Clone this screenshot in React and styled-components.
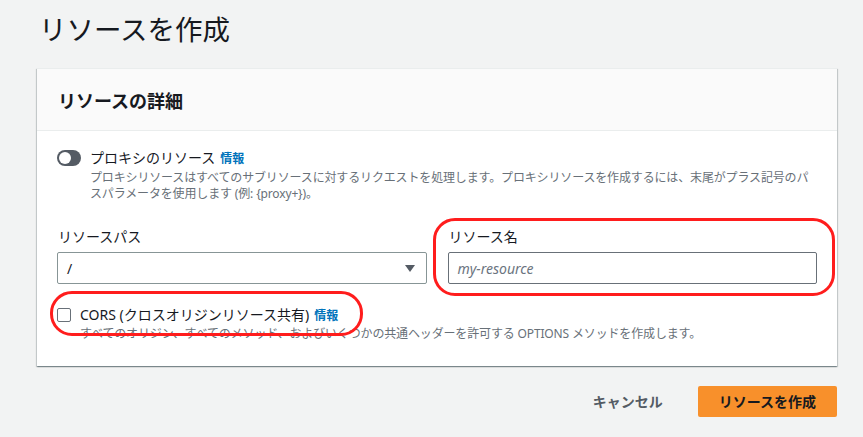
import React from "react";
import styled, { createGlobalStyle } from "styled-components";

const Global = createGlobalStyle`
  html, body { margin: 0; padding: 0; background: #f2f3f3; }
  body {
    font-family: "Noto Sans", "Noto Sans CJK JP", sans-serif;
    color: #16191f;
  }
  * { box-sizing: border-box; }
`;

const Page = styled.div`
  width: 863px;
  min-height: 437px;
  padding: 10px 26px 20px 37px;
  display: flex;
  flex-direction: column;
`;

const Title = styled.h1`
  margin: 0 0 22px 2px;
  font-size: 27.5px;
  line-height: 36px;
  font-weight: 400;
  color: #16191f;
  font-family: "Noto Sans CJK JP", sans-serif;
`;

const Panel = styled.section`
  background: #fff;
  border-top: 1px solid #eaeded;
  box-shadow: 0 1px 1px 0 rgba(0, 28, 36, 0.3), 1px 1px 1px 0 rgba(0, 28, 36, 0.15),
    -1px 1px 1px 0 rgba(0, 28, 36, 0.15);
`;

const PanelHeader = styled.header`
  background: #fafafa;
  border-bottom: 1px solid #eaeded;
  padding: 19px 21px 18px;
`;

const PanelTitle = styled.h2`
  margin: 0;
  font-size: 18px;
  line-height: 24px;
  font-weight: 700;
  font-family: "Noto Sans CJK JP", sans-serif;
`;

const PanelBody = styled.div`
  position: relative;
  padding: 16px 20px 24px;
  display: flex;
  flex-direction: column;
`;

const OptionRow = styled.div`
  display: flex;
  gap: 9px;
  align-items: flex-start;
  margin-top: ${(p) => p.$mt || 0}px;
`;

const Toggle = styled.span`
  flex: none;
  width: 24px;
  height: 16px;
  border-radius: 8px;
  background: #545b64;
  margin-top: 3px;
  position: relative;
  &::after {
    content: "";
    position: absolute;
    left: 2px;
    top: 2px;
    width: 12px;
    height: 12px;
    border-radius: 50%;
    background: #fff;
  }
`;

const Checkbox = styled.span`
  flex: none;
  width: 14px;
  height: 14px;
  border: 1px solid #687078;
  border-radius: 2px;
  background: #fff;
  margin-top: 3px;
`;

const OptionText = styled.div`
  display: flex;
  flex-direction: column;
  min-width: 0;
`;

const OptionLabel = styled.div`
  font-size: 14px;
  line-height: ${(p) => p.$lh || 22}px;
  color: #16191f;
`;

const InfoLink = styled.a`
  color: #0073bb;
  font-size: 12px;
  font-weight: 700;
  margin-left: 5px;
  text-decoration: none;
`;

const Description = styled.div`
  font-size: 12px;
  line-height: 16px;
  color: #687078;
  letter-spacing: -0.15px;
`;

const FieldGrid = styled.div`
  display: grid;
  grid-template-columns: 1fr 1fr;
  gap: 21px;
  margin-top: 24px;
`;

const Field = styled.div`
  display: flex;
  flex-direction: column;
  gap: 4px;
`;

const FieldLabel = styled.label`
  font-size: 14px;
  line-height: 22px;
  color: #16191f;
  padding-left: 1px;
`;

const Control = styled.div`
  height: 32px;
  border: 1px solid ${(p) => (p.$dark ? "#687078" : "#879596")};
  border-radius: 2px;
  background: #fff;
  display: flex;
  align-items: center;
  justify-content: space-between;
  padding: 0 11px 0 9px;
  font-size: 14px;
`;

const Placeholder = styled.span`
  color: #6b7480;
  font-style: italic;
`;

const Caret = styled.span`
  width: 0;
  height: 0;
  border-left: 5px solid transparent;
  border-right: 5px solid transparent;
  border-top: 7px solid #545b64;
`;

const Annotation = styled.div`
  position: absolute;
  border: 3.5px solid #ff1d1d;
  border-radius: 22px;
  pointer-events: none;
`;

const Actions = styled.div`
  display: flex;
  justify-content: flex-end;
  align-items: center;
  gap: 15px;
  margin-top: 20px;
`;

const Button = styled.button`
  font-family: "Noto Sans CJK JP", sans-serif;
  font-size: 14px;
  font-weight: 700;
  line-height: 21px;
  border: none;
  border-radius: 2px;
  cursor: pointer;
  padding: 5px ${(p) => (p.$primary ? 21 : 20)}px;
  background: ${(p) => (p.$primary ? "#f8902b" : "transparent")};
  color: ${(p) => (p.$primary ? "#16191f" : "#545b64")};
`;

const proxyDesc =
  "プロキシリソースはすべてのサブリソースに対するリクエストを処理します。プロキシリソースを作成するには、末尾がプラス記号のパスパラメータを使用します (例: {proxy+})。";

export default function App() {
  return (
    <>
      <Global />
      <Page>
        <Title>リソースを作成</Title>
        <Panel>
          <PanelHeader>
            <PanelTitle>リソースの詳細</PanelTitle>
          </PanelHeader>
          <PanelBody>
            <OptionRow>
              <Toggle />
              <OptionText>
                <OptionLabel>
                  プロキシのリソース<InfoLink href="#">情報</InfoLink>
                </OptionLabel>
                <Description>{proxyDesc}</Description>
              </OptionText>
            </OptionRow>

            <FieldGrid>
              <Field>
                <FieldLabel>リソースパス</FieldLabel>
                <Control>
                  <span>/</span>
                  <Caret />
                </Control>
              </Field>
              <Field>
                <FieldLabel>リソース名</FieldLabel>
                <Control $dark>
                  <Placeholder>my-resource</Placeholder>
                </Control>
              </Field>
            </FieldGrid>

            <OptionRow $mt={21}>
              <Checkbox />
              <OptionText>
                <OptionLabel $lh={20}>
                  CORS (クロスオリジンリソース共有)<InfoLink href="#">情報</InfoLink>
                </OptionLabel>
                <Description>
                  すべてのオリジン、すべてのメソッド、およびいくつかの共通ヘッダーを許可する OPTIONS メソッドを作成します。
                </Description>
              </OptionText>
            </OptionRow>

            <Annotation style={{ left: 396, top: 87, width: 402, height: 78 }} />
            <Annotation style={{ left: 13, top: 160, width: 313, height: 45 }} />
          </PanelBody>
        </Panel>
        <Actions>
          <Button>キャンセル</Button>
          <Button $primary>リソースを作成</Button>
        </Actions>
      </Page>
    </>
  );
}
